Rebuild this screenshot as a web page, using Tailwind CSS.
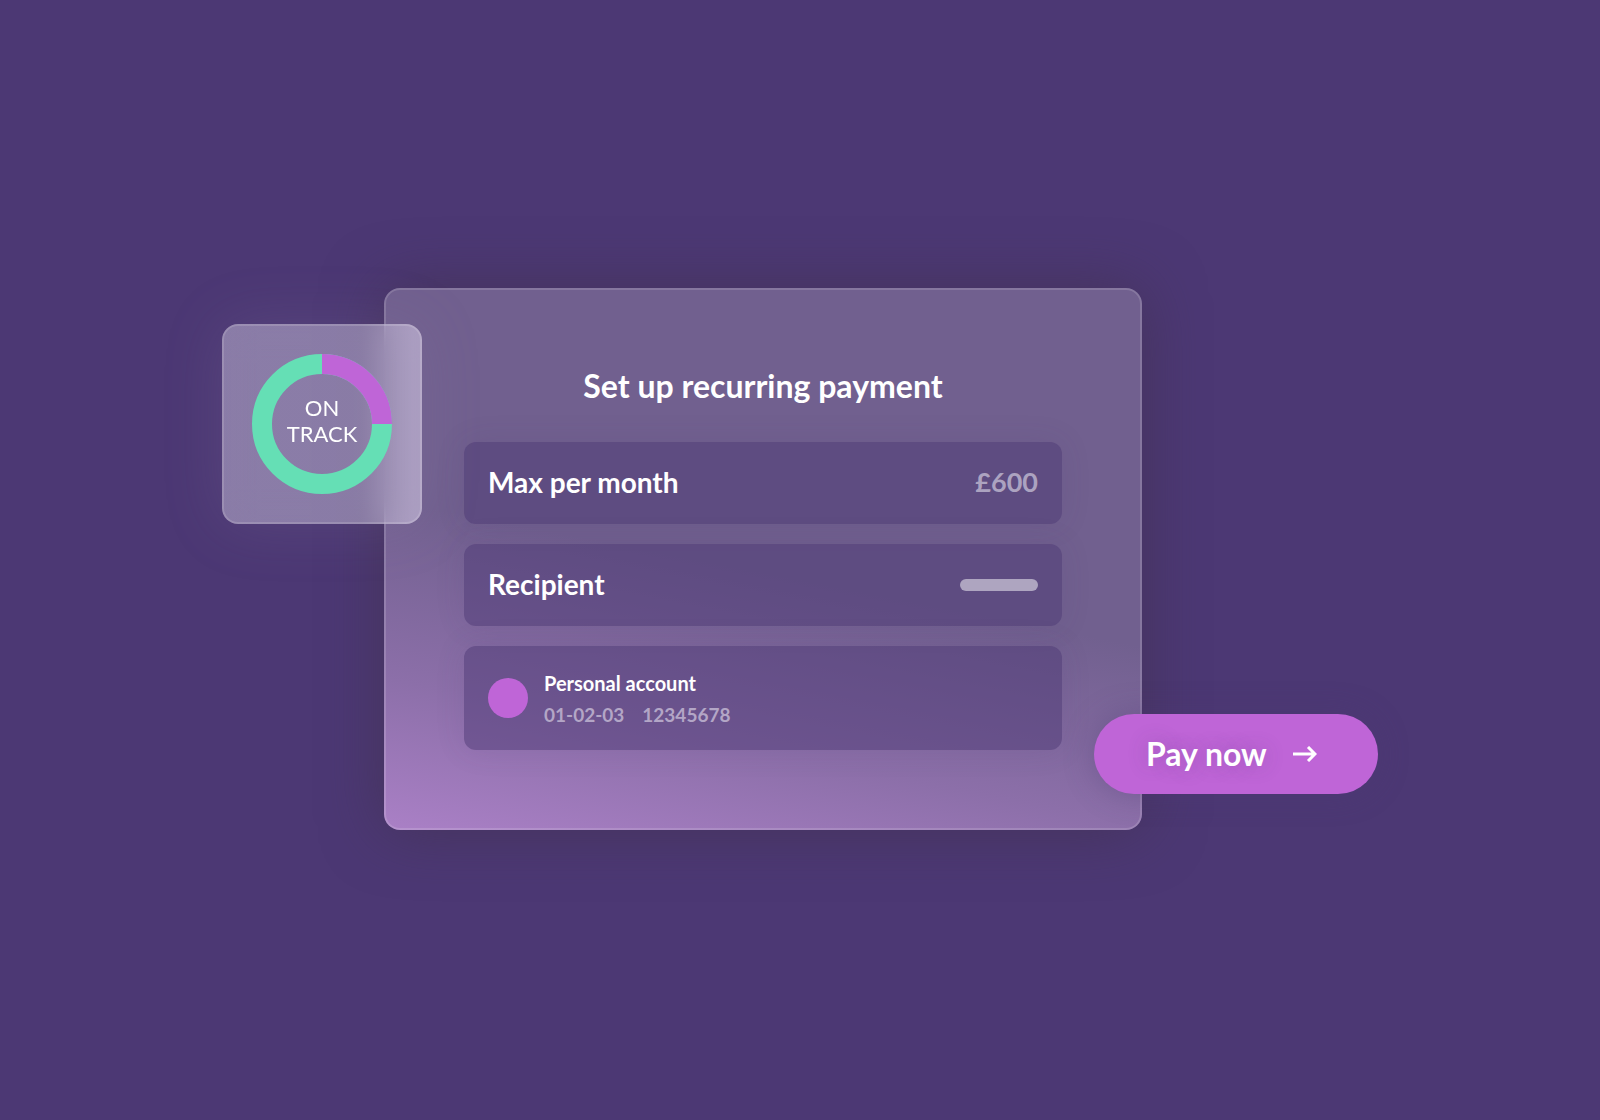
<!DOCTYPE html>
<html lang="en">
<head>
    <meta charset="UTF-8">
    <meta name="viewport" content="width=device-width, initial-scale=1.0">
    <title>Set up recurring payment</title>
    <script src="https://cdn.jsdelivr.net/npm/@tailwindcss/browser@4"></script>
</head>
<body class="bg-[#4c3874] font-['Lato',sans-serif] text-white">
    <main class="min-h-screen flex items-center justify-center pb-0.5 overflow-hidden">
        <div class="relative w-full max-w-[1156px] pl-[162px] pr-[236px]">

            <!-- Payment card -->
            <form class="rounded-2xl border-2 border-white/15 bg-[linear-gradient(11deg,#aa80c6_0%,#8c6fa9_22%,#71608f_48%)] bg-origin-border px-[78px] pt-[76px] pb-[78px] shadow-[0_0_60px_rgba(66,50,78,0.7)]">
                <h1 class="text-[32px] leading-10 font-bold text-center mb-9">Set up recurring payment</h1>

                <div class="flex flex-col gap-5">
                    <div class="flex items-center justify-between h-[82px] px-6 pb-0.5 rounded-xl bg-[#4c3874]/50 shadow-[0_0_30px_rgba(76,56,116,0.12)]">
                        <label for="maxAmount" class="text-[28px] leading-8 font-bold">Max per month</label>
                        <input id="maxAmount" type="text" value="£600" class="w-32 bg-transparent text-right text-[27px] leading-8 font-bold text-[#aca3c0] outline-none">
                    </div>

                    <div class="flex items-center justify-between h-[82px] px-6 rounded-xl bg-[#4c3874]/50 shadow-[0_0_30px_rgba(76,56,116,0.12)]">
                        <span class="pb-0.5 text-[28px] leading-8 font-bold">Recipient</span>
                        <span class="w-[78px] h-3 rounded-full bg-[#aea5c0]"></span>
                    </div>

                    <div class="flex items-center gap-4 h-[104px] px-6 rounded-xl bg-[#4c3874]/50 shadow-[0_0_30px_rgba(76,56,116,0.12)]">
                        <span class="size-10 rounded-full bg-[#bf65d7]"></span>
                        <div class="pt-0.5 leading-8 font-bold">
                            <p class="text-xl leading-8">Personal account</p>
                            <p class="flex gap-[18px] text-[19px] text-[#b3a6c6]"><span>01-02-03</span><span>12345678</span></p>
                        </div>
                    </div>
                </div>
            </form>

            <!-- Status badge -->
            <div class="absolute left-0 top-9 size-[200px] flex items-center justify-center rounded-2xl border-2 border-white/15 bg-[linear-gradient(90deg,#c8c0da80_70%,#d6cce690_95%)] bg-origin-border backdrop-blur-lg shadow-[0_0_60px_rgba(140,125,165,0.2)]">
                <svg class="absolute size-[140px]" viewBox="0 0 140 140" fill="none" stroke-width="20" aria-hidden="true">
                    <circle cx="70" cy="70" r="60" stroke="#65dfb5"/>
                    <path d="M70 10A60 60 0 0 1 130 70" stroke="#bf65d7"/>
                </svg>
                <p class="relative pb-1.5 text-center text-[22px] leading-[26px]">ON<br>TRACK</p>
            </div>

            <button type="button" class="absolute right-0 bottom-9 w-[284px] h-20 flex items-center gap-[26px] pl-[52px] rounded-full bg-[#bf65d7] text-[32px] leading-10 font-bold shadow-[0_0_30px_rgba(76,56,116,0.35)]">
                <span class="text-shadow-[0_0_20px_rgba(76,56,116,0.3)]">Pay now</span>
                <svg class="w-6 h-4" viewBox="0 0 24 16" fill="none" stroke="currentColor" stroke-width="3" aria-hidden="true">
                    <path d="M0 8H22M15 1L22 8L15 15"/>
                </svg>
            </button>
        </div>
    </main>
</body>
</html>
